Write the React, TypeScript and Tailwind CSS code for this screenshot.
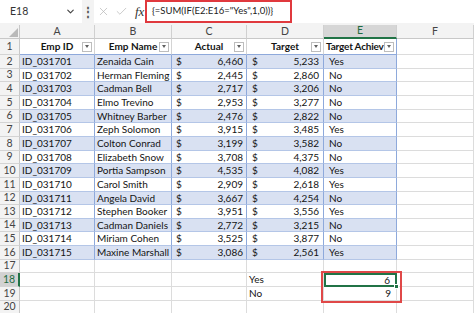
import React from "react";
import { ChevronDown, X, Check } from "lucide-react";

type Row = [string, string, string, string, string];

const data: Row[] = [
  ["ID_031701", "Zenaida Cain", "6,460", "5,233", "Yes"],
  ["ID_031702", "Herman Fleming", "2,445", "2,860", "No"],
  ["ID_031703", "Cadman Bell", "2,717", "3,206", "No"],
  ["ID_031704", "Elmo Trevino", "2,953", "3,277", "No"],
  ["ID_031705", "Whitney Barber", "2,476", "2,822", "No"],
  ["ID_031706", "Zeph Solomon", "3,915", "3,485", "Yes"],
  ["ID_031707", "Colton Conrad", "3,199", "3,582", "No"],
  ["ID_031708", "Elizabeth Snow", "3,708", "4,375", "No"],
  ["ID_031709", "Portia Sampson", "4,535", "4,082", "Yes"],
  ["ID_031710", "Carol Smith", "2,909", "2,618", "Yes"],
  ["ID_031711", "Angela David", "3,667", "4,254", "No"],
  ["ID_031712", "Stephen Booker", "3,951", "3,556", "Yes"],
  ["ID_031713", "Cadman Daniels", "2,772", "3,215", "No"],
  ["ID_031714", "Miriam Cohen", "3,525", "3,877", "No"],
  ["ID_031715", "Maxine Marshall", "3,086", "2,561", "Yes"],
];

// heights for rows 2..20
const heights = [
  "h-[14px]", "h-[13px]", "h-[14px]", "h-[14px]", "h-[13px]", "h-[14px]", "h-[14px]",
  "h-[13px]", "h-[14px]", "h-[14px]", "h-[13px]", "h-[14px]", "h-[13px]", "h-[14px]",
  "h-[14px]", "h-[13px]", "h-[14px]", "h-[14px]", "h-[13px]",
];

const colW = ["w-[75px]", "w-[77px]", "w-[75px]", "w-[77px]", "w-[73px]", "flex-1"];
const letters = ["A", "B", "C", "D", "E", "F"];

function DropBtn() {
  return (
    <span className="w-[10px] h-[10px] shrink-0 border border-[#bdbdbd] bg-white flex items-center justify-center">
      <span className="w-0 h-0 border-l-[2px] border-r-[2px] border-t-[3px] border-l-transparent border-r-transparent border-t-[#606060]" />
    </span>
  );
}

function RowHeader({ n, cls, selected }: { n: number; cls: string; selected?: boolean }) {
  return (
    <div
      className={
        "w-[20px] shrink-0 flex items-center justify-center text-[10.5px] border-b border-[#d4d4d4] " +
        cls +
        (selected
          ? " bg-[#d2d2d2] text-[#1e6b41] border-r-2 border-r-[#217346]"
          : " bg-[#f3f3f3] text-[#444] border-r border-r-[#c8c8c8]")
      }
    >
      {n}
    </div>
  );
}

export default function App() {
  return (
    <div className="relative w-[474px] h-[313px] overflow-hidden bg-white font-['Lato'] text-[#141414]">
      {/* formula bar */}
      <div className="flex h-[25px] bg-[#f3f3f3] pb-[2px]">
        <div className="w-[82px] bg-white flex items-center justify-between pl-[10px] pr-[6px] text-[10.5px] text-[#333]">
          <span>E18</span>
          <ChevronDown size={11} strokeWidth={2.5} color="#444" />
        </div>
        <div className="w-[12px] flex items-center justify-center text-[#555] text-[12px] font-bold leading-none">
          ⋮
        </div>
        <div className="w-[52px] bg-white flex items-center gap-[5px] pl-[3px]">
          <X size={13} strokeWidth={1.3} color="#b5b5b5" />
          <Check size={13} strokeWidth={1.3} color="#b5b5b5" />
          <span className="font-['Liberation_Serif'] italic text-[13px] text-[#333] leading-none ml-[2px]">fx</span>
        </div>
        <div className="flex-1 bg-white flex items-center pl-[6px] text-[9.5px] text-[#222]">
          {'{=SUM(IF(E2:E16="Yes",1,0))}'}
        </div>
      </div>

      {/* column header row */}
      <div className="flex h-[14px]">
        <div className="w-[20px] shrink-0 bg-[#f3f3f3] border-r border-b border-[#c8c8c8] flex items-end justify-end">
          <svg width="9" height="9" viewBox="0 0 9 9" className="mb-[1px] mr-[1px]">
            <polygon points="9,0 9,9 0,9" fill="#b9b9b9" />
          </svg>
        </div>
        {letters.map((l, i) => (
          <div
            key={l}
            className={
              colW[i] +
              " shrink-0 flex items-center justify-center text-[10.5px] border-r border-[#d0d0d0] " +
              (i === 4
                ? "bg-[#d6d6d6] text-[#1e6b41] border-b-2 border-b-[#217346]"
                : "bg-[#f3f3f3] text-[#444] border-b border-b-[#c8c8c8]")
            }
          >
            {l}
          </div>
        ))}
      </div>

      {/* header row 1 */}
      <div className="flex h-[16px]">
        <RowHeader n={1} cls="" />
        {["Emp ID", "Emp Name", "Actual", "Target"].map((h, i) => (
          <div
            key={h}
            className={
              colW[i] +
              " shrink-0 flex items-center bg-white border-b border-b-[#8ea9db] border-r border-r-[#d4d4d4] pr-[2px] font-bold text-[10px]"
            }
          >
            <span className="w-[12px] shrink-0" />
            <span className="flex-1 text-center">{h}</span>
            <DropBtn />
          </div>
        ))}
        <div className="w-[73px] shrink-0 flex items-center justify-between bg-white border-b border-b-[#8ea9db] border-r border-r-[#8ea9db] pl-[2px] pr-[2px] font-bold text-[10px]">
          <span className="whitespace-nowrap tracking-[-0.2px]">Target Achiev</span>
          <DropBtn />
        </div>
        <div className="flex-1 border-b border-r border-[#dcdcdc]" />
      </div>

      {/* rows 2..20 */}
      {heights.map((h, idx) => {
        const n = idx + 2;
        const d = data[idx];
        if (d) {
          const stripe = idx % 2 === 0 ? "bg-[#d9e1f2]" : "bg-white";
          const cell =
            " shrink-0 flex items-center text-[10px] border-b border-b-[#b4c6e7] border-r border-r-[#8ea9db] " + stripe;
          return (
            <div key={n} className={"flex " + h}>
              <RowHeader n={n} cls={h} />
              <div className={colW[0] + cell + " pl-[2px]"}>{d[0]}</div>
              <div className={colW[1] + cell + " pl-[2px] whitespace-nowrap"}>{d[1]}</div>
              <div className={colW[2] + cell + " justify-between pl-[4px] pr-[3px]"}>
                <span>$</span>
                <span>{d[2]}</span>
              </div>
              <div className={colW[3] + cell + " justify-between pl-[5px] pr-[4px]"}>
                <span>$</span>
                <span>{d[3]}</span>
              </div>
              <div className={colW[4] + cell + " pl-[5px]"}>{d[4]}</div>
              <div className="flex-1 border-b border-r border-[#dcdcdc]" />
            </div>
          );
        }
        const sel = n === 18;
        const empty = " shrink-0 border-b border-r border-[#dcdcdc] text-[10px] flex items-center";
        return (
          <div key={n} className={"flex " + h}>
            <RowHeader n={n} cls={h} selected={sel} />
            <div className={colW[0] + empty} />
            <div className={colW[1] + empty} />
            <div className={colW[2] + empty} />
            <div className={colW[3] + empty + " pl-[2px]"}>{n === 18 ? "Yes" : n === 19 ? "No" : ""}</div>
            <div
              className={
                colW[4] +
                " shrink-0 text-[10px] flex items-center justify-end pr-[5px] " +
                (sel ? "border-2 border-[#217346] relative" : "border-b border-r border-[#dcdcdc]")
              }
            >
              {n === 18 ? "6" : n === 19 ? "9" : ""}
              {sel && (
                <span className="absolute right-[-4px] bottom-[-4px] w-[5px] h-[5px] bg-[#217346] border border-white" />
              )}
            </div>
            <div className="flex-1 border-b border-r border-[#dcdcdc]" />
          </div>
        );
      })}

      {/* annotation boxes */}
      <div className="absolute left-[145px] top-0 w-[147px] h-[23px] border-2 border-[#e0393e]" />
      <div className="absolute left-[321px] top-[271px] w-[81px] h-[32px] border-2 border-[#e04848]" />
    </div>
  );
}
